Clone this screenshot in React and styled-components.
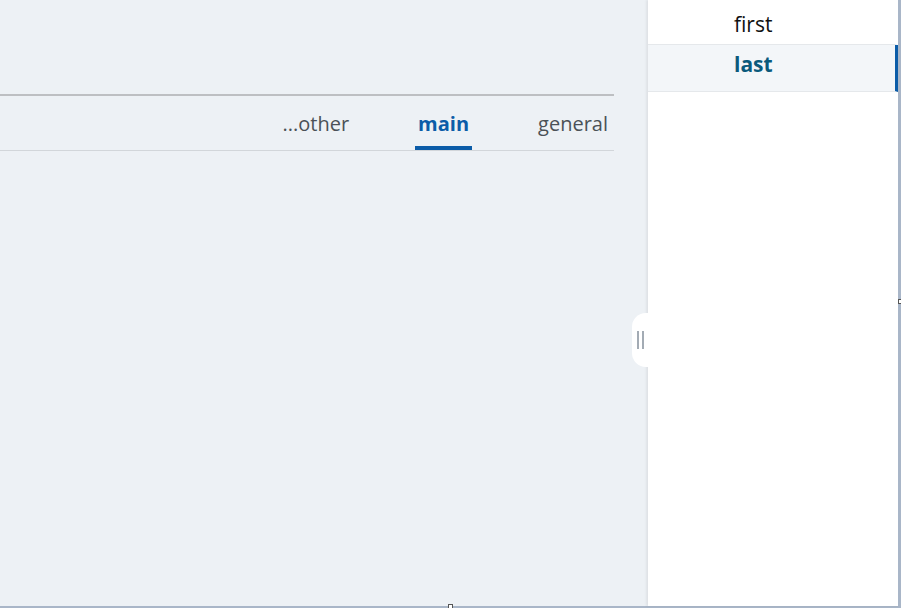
import React, { useState } from "react";
import styled, { createGlobalStyle } from "styled-components";

const GlobalStyle = createGlobalStyle`
  html, body {
    margin: 0;
    padding: 0;
    font-family: "Open Sans", "Noto Sans", sans-serif;
  }
`;

const Page = styled.div`
  position: relative;
  box-sizing: border-box;
  width: 901px;
  height: 608px;
  display: flex;
  background: #edf1f5;
  border-bottom: 2px solid #a9b6c8;
`;

const Main = styled.div`
  flex: 1;
  display: flex;
  flex-direction: column;
  padding-top: 94px;
  padding-right: 34px;
`;

const TabBar = styled.div`
  display: flex;
  justify-content: flex-end;
  gap: 63px;
  height: 54px;
  padding-right: 3px;
  border-top: 2px solid #bdbfc2;
  border-bottom: 1px solid #d2d6da;
`;

const Tab = styled.button`
  display: flex;
  align-items: center;
  padding: 0 3px;
  margin: 0;
  border: none;
  border-bottom: 4px solid ${(p) => (p.active ? "#0b5ca8" : "transparent")};
  background: none;
  font-family: inherit;
  font-size: 20px;
  font-weight: ${(p) => (p.active ? 700 : 400)};
  color: ${(p) => (p.active ? "#0b5ca8" : "#4b5157")};
  padding-top: 4px;
  cursor: pointer;
`;

const Handle = styled.div`
  position: absolute;
  left: 632px;
  top: 313px;
  width: 16px;
  height: 54px;
  box-sizing: border-box;
  background: #fff;
  border-radius: 14px 0 0 14px;
  display: flex;
  align-items: center;
  justify-content: flex-end;
  gap: 3px;
  padding-right: 4px;
`;

const Grip = styled.span`
  width: 2px;
  height: 18px;
  background: #a3abb4;
`;

const Panel = styled.div`
  width: 250px;
  background: #fff;
  border-right: 3px solid #a9b6c8;
  box-shadow: -2px 0 2px rgba(0, 0, 0, 0.06);
  display: flex;
  flex-direction: column;
`;

const Row = styled.div`
  box-sizing: border-box;
  height: ${(p) => p.h}px;
  display: flex;
  align-items: center;
  padding-left: 86px;
  padding-top: ${(p) => (p.selected ? 0 : 4)}px;
  padding-bottom: ${(p) => (p.selected ? 8 : 0)}px;
  font-size: 21px;
  font-weight: ${(p) => (p.selected ? 700 : 400)};
  color: ${(p) => (p.selected ? "#0a5a7c" : "#111")};
  background: ${(p) => (p.selected ? "#f3f6f9" : "#fff")};
  border-bottom: 1px solid #e5e8eb;
  border-right: 3px solid ${(p) => (p.selected ? "#0b5ca8" : "transparent")};
`;

const Dot = styled.span`
  position: absolute;
  width: 3px;
  height: 3px;
  border: 1px solid #555;
  background: #fff;
`;

const tabs = ["...other", "main", "general"];

export default function App() {
  const [active, setActive] = useState("main");
  return (
    <>
      <GlobalStyle />
      <Page>
        <Main>
          <TabBar>
            {tabs.map((t) => (
              <Tab key={t} active={t === active} onClick={() => setActive(t)}>
                {t}
              </Tab>
            ))}
          </TabBar>
        </Main>
        <Handle>
          <Grip />
          <Grip />
        </Handle>
        <Panel>
          <Row h={45}>first</Row>
          <Row h={47} selected>
            last
          </Row>
        </Panel>
        <Dot style={{ left: 448, top: 604 }} />
        <Dot style={{ left: 898, top: 299 }} />
      </Page>
    </>
  );
}
